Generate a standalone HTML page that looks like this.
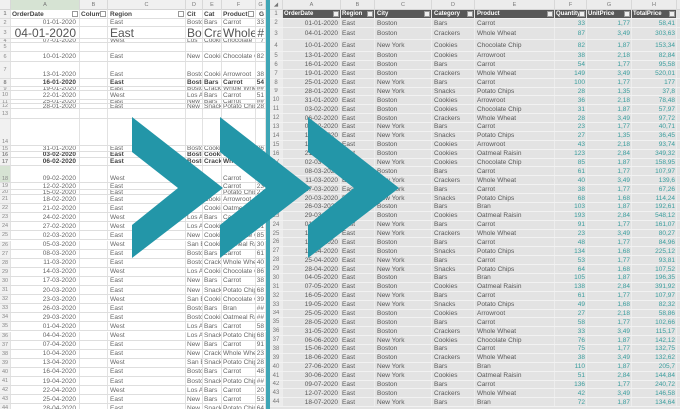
<!DOCTYPE html>
<html><head><meta charset="utf-8"><style>
*{margin:0;padding:0;box-sizing:border-box}
body{width:680px;height:409px;overflow:hidden;background:#fff;font-family:"Liberation Sans",sans-serif;position:relative}
.L{position:absolute;left:0;top:0;width:266px;height:409px;background:#fff;overflow:hidden}
.R{position:absolute;left:270px;top:0;width:410px;height:409px;background:#e3e3e3;overflow:hidden}
.bar{position:absolute;left:266px;top:0;width:4px;height:409px;background:#3fa6b6}
.row{position:absolute;left:0;width:100%;border-bottom:1px solid #dedede;font-size:6.5px;color:#666;overflow:hidden;white-space:nowrap}
.row span{position:absolute;top:0;height:100%;overflow:hidden;border-right:1px solid #e2e2e2;padding:0 1px;display:flex;align-items:center}
.L .n{left:0;width:11px;background:#f1f1f1;justify-content:center;color:#888;font-size:5.5px}
.L .a{left:11px;width:69px;justify-content:flex-end;padding-right:3px}
.L .b{left:80px;width:28px}
.L .c{left:108px;width:78px;padding-left:2px}
.L .d{left:186px;width:17px}
.L .e{left:203px;width:19px}
.L .f{left:222px;width:34px}
.L .g{left:256px;width:10px;justify-content:flex-end}
.hd{position:absolute;top:0;left:0;width:100%;height:10px;background:#f0f0f0;border-bottom:1px solid #d4d4d4;font-size:5.5px;color:#777}
.hd span{position:absolute;top:0;height:10px;display:flex;align-items:center;justify-content:center;border-right:1px solid #d8d8d8}
.b1{font-weight:bold;color:#444}
.big{font-size:12px;color:#555}
.R .row{border-bottom:1px solid #f2f2f2;color:#5a5a5a;font-size:6.5px}
.R .row span{border-right:1px solid #ededed}
.R .n{left:0;width:13px;background:#ececec;justify-content:center;color:#777;font-size:6px}
.R .a{left:13px;width:58px;justify-content:flex-end;padding-right:2px}
.R .b{left:71px;width:34px}
.R .c{left:105px;width:57px;padding-left:2px}
.R .d{left:162px;width:43px;padding-left:2px}
.R .e{left:205px;width:80px;padding-left:2px}
.R .f{left:285px;width:32px;justify-content:flex-end;color:#3a9e9e}
.R .g{left:317px;width:45px;justify-content:flex-end;color:#3a9e9e}
.R .h{left:362px;width:45px;justify-content:flex-end;color:#3a9e9e}
.R .hr span{background:#585858;color:#fff;font-weight:bold;border-right:1px solid #e3e3e3}
.R .hr span.n{background:#ececec;color:#777;font-weight:normal}
.fb{position:absolute;right:1px;top:1px;width:6px;height:6px;background:#eee;border:1px solid #999}
.L .hr .fb{background:#fff}
svg{position:absolute;left:0;top:0}
</style></head><body>
<div class="L">
<div class="hd"><span style="left:0;width:11px"></span><span style="left:11px;width:69px;background:#d6e3d3">A</span><span style="left:80px;width:28px">B</span><span style="left:108px;width:78px">C</span><span style="left:186px;width:17px">D</span><span style="left:203px;width:19px">E</span><span style="left:222px;width:34px">F</span><span style="left:256px;width:10px">G</span></div>
<div class="row hr b1" style="top:10px;height:9px"><span class="n">1</span><span class="a" style="justify-content:flex-start">OrderDate<i class="fb"></i></span><span class="b">Colum<i class="fb"></i></span><span class="c">Region<i class="fb"></i></span><span class="d">Cit</span><span class="e">Cat</span><span class="f">Product<i class="fb"></i></span><span class="g">G</span></div>
<div class="row" style="top:19px;height:8px"><span class="n">2</span><span class="a">01-01-2020</span><span class="b"></span><span class="c">East</span><span class="d">Bosto</span><span class="e">Bars</span><span class="f">Carrot</span><span class="g">33</span></div>
<div class="row big" style="top:27px;height:12px"><span class="n" style="font-size:5.5px">3</span><span class="a">04-01-2020</span><span class="b"></span><span class="c">East</span><span class="d">Bos</span><span class="e">Cracl</span><span class="f">Whole W</span><span class="g">#</span></div>
<div class="row" style="top:39px;height:4px"><span class="n">4</span><span class="a">07-01-2020</span><span class="b"></span><span class="c">West</span><span class="d">Los</span><span class="e">Cookie</span><span class="f">Chocolate</span><span class="g">7</span></div>
<div class="row" style="top:43px;height:9px"><span class="n">5</span><span class="a"></span><span class="b"></span><span class="c"></span><span class="d"></span><span class="e"></span><span class="f"></span><span class="g"></span></div>
<div class="row" style="top:52px;height:10px"><span class="n">6</span><span class="a">10-01-2020</span><span class="b"></span><span class="c">East</span><span class="d">New</span><span class="e">Cookie</span><span class="f">Chocolate C</span><span class="g">82</span></div>
<div class="row" style="top:62px;height:17px"><span class="n">7</span><span class="a" style="align-items:flex-end">13-01-2020</span><span class="b"></span><span class="c" style="align-items:flex-end">East</span><span class="d" style="align-items:flex-end">Bosto</span><span class="e" style="align-items:flex-end">Cookie</span><span class="f" style="align-items:flex-end">Arrowroot</span><span class="g" style="align-items:flex-end">38</span></div>
<div class="row b1" style="top:79px;height:8px"><span class="n">8</span><span class="a">16-01-2020</span><span class="b"></span><span class="c">East</span><span class="d">Bosto</span><span class="e">Bars</span><span class="f">Carrot</span><span class="g">54</span></div>
<div class="row" style="top:87px;height:4px"><span class="n">9</span><span class="a">19-01-2020</span><span class="b"></span><span class="c">East</span><span class="d">Bosto</span><span class="e">Cracke</span><span class="f">Whole Whe</span><span class="g">##</span></div>
<div class="row" style="top:91px;height:9px"><span class="n">10</span><span class="a">22-01-2020</span><span class="b"></span><span class="c">West</span><span class="d">Los A</span><span class="e">Bars</span><span class="f">Carrot</span><span class="g">51</span></div>
<div class="row" style="top:100px;height:4px"><span class="n">11</span><span class="a">25-01-2020</span><span class="b"></span><span class="c">East</span><span class="d">New</span><span class="e">Bars</span><span class="f">Carrot</span><span class="g">##</span></div>
<div class="row" style="top:104px;height:5px"><span class="n">12</span><span class="a">28-01-2020</span><span class="b"></span><span class="c">East</span><span class="d">New</span><span class="e">Snacks</span><span class="f">Potato Chip</span><span class="g">28</span></div>
<div class="row" style="top:109px;height:10px"><span class="n">13</span><span class="a"></span><span class="b"></span><span class="c"></span><span class="d"></span><span class="e"></span><span class="f"></span><span class="g"></span></div>
<div class="row" style="top:119px;height:27px"><span class="n" style="align-items:flex-end">14</span><span class="a"></span><span class="b"></span><span class="c"></span><span class="d"></span><span class="e"></span><span class="f"></span><span class="g"></span></div>
<div class="row" style="top:146px;height:6px"><span class="n">15</span><span class="a">31-01-2020</span><span class="b"></span><span class="c">East</span><span class="d">Bostc</span><span class="e">Cookie</span><span class="f">Arrowroot</span><span class="g">36</span></div>
<div class="row b1" style="top:152px;height:6px"><span class="n">16</span><span class="a">03-02-2020</span><span class="b"></span><span class="c">East</span><span class="d">Bostc</span><span class="e">Cookie</span><span class="f">Chocolate</span><span class="g">31</span></div>
<div class="row b1" style="top:158px;height:8px"><span class="n">17</span><span class="a">06-02-2020</span><span class="b"></span><span class="c">East</span><span class="d">Bostc</span><span class="e">Cracke</span><span class="f">Whole Whe</span><span class="g">28</span></div>
<div class="row" style="top:166px;height:17px"><span class="n" style="background:#d6e3d3;align-items:flex-end">18</span><span class="a" style="align-items:flex-end">09-02-2020</span><span class="b"></span><span class="c" style="align-items:flex-end">West</span><span class="d"></span><span class="e"></span><span class="f" style="align-items:flex-end">Carrot</span><span class="g"></span></div>
<div class="row" style="top:183px;height:7px"><span class="n">19</span><span class="a">12-02-2020</span><span class="b"></span><span class="c">East</span><span class="d"></span><span class="e"></span><span class="f">Carrot</span><span class="g">23</span></div>
<div class="row" style="top:190px;height:5px"><span class="n">20</span><span class="a">15-02-2020</span><span class="b"></span><span class="c">East</span><span class="d"></span><span class="e"></span><span class="f">Potato Chip</span><span class="g">27</span></div>
<div class="row" style="top:195px;height:9.1px"><span class="n">21</span><span class="a">18-02-2020</span><span class="b"></span><span class="c">East</span><span class="d"></span><span class="e">Cookie</span><span class="f">Arrowroot</span><span class="g">43</span></div>
<div class="row" style="top:204.1px;height:9.1px"><span class="n">22</span><span class="a">21-02-2020</span><span class="b"></span><span class="c">East</span><span class="d"></span><span class="e">Cookie</span><span class="f">Oatmeal</span><span class="g">##</span></div>
<div class="row" style="top:213.2px;height:9.1px"><span class="n">23</span><span class="a">24-02-2020</span><span class="b"></span><span class="c">West</span><span class="d">Los A</span><span class="e">Bars</span><span class="f">Carrot</span><span class="g">20</span></div>
<div class="row" style="top:222.3px;height:9.1px"><span class="n">24</span><span class="a">27-02-2020</span><span class="b"></span><span class="c">West</span><span class="d">Los A</span><span class="e">Cookie</span><span class="f">Chocolate C</span><span class="g">61</span></div>
<div class="row" style="top:231.4px;height:9.1px"><span class="n">25</span><span class="a">02-03-2020</span><span class="b"></span><span class="c">East</span><span class="d">New</span><span class="e">Cookie</span><span class="f">Chocolate C</span><span class="g">85</span></div>
<div class="row" style="top:240.5px;height:9.1px"><span class="n">26</span><span class="a">05-03-2020</span><span class="b"></span><span class="c">West</span><span class="d">San E</span><span class="e">Cookie</span><span class="f">Oatmeal Ra</span><span class="g">30</span></div>
<div class="row" style="top:249.6px;height:9.1px"><span class="n">27</span><span class="a">08-03-2020</span><span class="b"></span><span class="c">East</span><span class="d">Bostc</span><span class="e">Bars</span><span class="f">Carrot</span><span class="g">61</span></div>
<div class="row" style="top:258.7px;height:9.1px"><span class="n">28</span><span class="a">11-03-2020</span><span class="b"></span><span class="c">East</span><span class="d">Bostc</span><span class="e">Cracke</span><span class="f">Whole Whe</span><span class="g">40</span></div>
<div class="row" style="top:267.8px;height:9.1px"><span class="n">29</span><span class="a">14-03-2020</span><span class="b"></span><span class="c">West</span><span class="d">Los A</span><span class="e">Cookie</span><span class="f">Chocolate C</span><span class="g">86</span></div>
<div class="row" style="top:276.9px;height:9.1px"><span class="n">30</span><span class="a">17-03-2020</span><span class="b"></span><span class="c">East</span><span class="d">New</span><span class="e">Bars</span><span class="f">Carrot</span><span class="g">38</span></div>
<div class="row" style="top:286px;height:9.1px"><span class="n">31</span><span class="a">20-03-2020</span><span class="b"></span><span class="c">East</span><span class="d">New</span><span class="e">Snacks</span><span class="f">Potato Chip</span><span class="g">68</span></div>
<div class="row" style="top:295.1px;height:9.1px"><span class="n">32</span><span class="a">23-03-2020</span><span class="b"></span><span class="c">West</span><span class="d">San E</span><span class="e">Cookie</span><span class="f">Chocolate C</span><span class="g">39</span></div>
<div class="row" style="top:304.2px;height:9.1px"><span class="n">33</span><span class="a">26-03-2020</span><span class="b"></span><span class="c">East</span><span class="d">Bostc</span><span class="e">Bars</span><span class="f">Bran</span><span class="g">##</span></div>
<div class="row" style="top:313.3px;height:9.1px"><span class="n">34</span><span class="a">29-03-2020</span><span class="b"></span><span class="c">East</span><span class="d">Bostc</span><span class="e">Cookie</span><span class="f">Oatmeal Ra</span><span class="g">##</span></div>
<div class="row" style="top:322.4px;height:9.1px"><span class="n">35</span><span class="a">01-04-2020</span><span class="b"></span><span class="c">West</span><span class="d">Los A</span><span class="e">Bars</span><span class="f">Carrot</span><span class="g">58</span></div>
<div class="row" style="top:331.5px;height:9.1px"><span class="n">36</span><span class="a">04-04-2020</span><span class="b"></span><span class="c">West</span><span class="d">Los A</span><span class="e">Snacks</span><span class="f">Potato Chip</span><span class="g">68</span></div>
<div class="row" style="top:340.6px;height:9.1px"><span class="n">37</span><span class="a">07-04-2020</span><span class="b"></span><span class="c">East</span><span class="d">New</span><span class="e">Bars</span><span class="f">Carrot</span><span class="g">91</span></div>
<div class="row" style="top:349.7px;height:9.1px"><span class="n">38</span><span class="a">10-04-2020</span><span class="b"></span><span class="c">East</span><span class="d">New</span><span class="e">Cracke</span><span class="f">Whole Whe</span><span class="g">23</span></div>
<div class="row" style="top:358.8px;height:9.1px"><span class="n">39</span><span class="a">13-04-2020</span><span class="b"></span><span class="c">West</span><span class="d">San E</span><span class="e">Snacks</span><span class="f">Potato Chip</span><span class="g">28</span></div>
<div class="row" style="top:367.9px;height:9.1px"><span class="n">40</span><span class="a">16-04-2020</span><span class="b"></span><span class="c">East</span><span class="d">Bostc</span><span class="e">Bars</span><span class="f">Carrot</span><span class="g">48</span></div>
<div class="row" style="top:377px;height:9.1px"><span class="n">41</span><span class="a">19-04-2020</span><span class="b"></span><span class="c">East</span><span class="d">Bostc</span><span class="e">Snacks</span><span class="f">Potato Chip</span><span class="g">##</span></div>
<div class="row" style="top:386.1px;height:9.1px"><span class="n">42</span><span class="a">22-04-2020</span><span class="b"></span><span class="c">West</span><span class="d">Los A</span><span class="e">Bars</span><span class="f">Carrot</span><span class="g">20</span></div>
<div class="row" style="top:395.2px;height:9.1px"><span class="n">43</span><span class="a">25-04-2020</span><span class="b"></span><span class="c">East</span><span class="d">New</span><span class="e">Bars</span><span class="f">Carrot</span><span class="g">53</span></div>
<div class="row" style="top:404.3px;height:9.1px"><span class="n">44</span><span class="a">28-04-2020</span><span class="b"></span><span class="c">East</span><span class="d">New</span><span class="e">Snacks</span><span class="f">Potato Chip</span><span class="g">64</span></div>
</div>
<div class="bar"></div>
<div class="R">
<div class="hd" style="background:#ececec"><span style="left:0;width:13px">◢</span><span style="left:13px;width:58px">A</span><span style="left:71px;width:34px">B</span><span style="left:105px;width:57px">C</span><span style="left:162px;width:43px">D</span><span style="left:205px;width:80px">E</span><span style="left:285px;width:32px">F</span><span style="left:317px;width:45px">G</span><span style="left:362px;width:45px">H</span></div>
<div class="row hr" style="top:10px;height:9px;font-size:6px"><span class="n">1</span><span class="a" style="justify-content:flex-start">OrderDate<i class="fb"></i></span><span class="b">Region<i class="fb"></i></span><span class="c">City<i class="fb"></i></span><span class="d">Category<i class="fb"></i></span><span class="e">Product<i class="fb"></i></span><span class="f" style="justify-content:flex-start;color:#fff">Quantity<i class="fb"></i></span><span class="g" style="justify-content:flex-start;color:#fff">UnitPrice<i class="fb"></i></span><span class="h" style="justify-content:flex-start;color:#fff">TotalPrice<i class="fb"></i></span></div>
<div class="row" style="top:19px;height:9px"><span class="n">2</span><span class="a">01-01-2020</span><span class="b">East</span><span class="c">Boston</span><span class="d">Bars</span><span class="e">Carrot</span><span class="f">33</span><span class="g">1,77</span><span class="h">58,41</span></div>
<div class="row" style="top:28px;height:12px"><span class="n">3</span><span class="a">04-01-2020</span><span class="b">East</span><span class="c">Boston</span><span class="d">Crackers</span><span class="e">Whole Wheat</span><span class="f">87</span><span class="g">3,49</span><span class="h">303,63</span></div>
<div class="row" style="top:40px;height:12px"><span class="n">4</span><span class="a">10-01-2020</span><span class="b">East</span><span class="c">New York</span><span class="d">Cookies</span><span class="e">Chocolate Chip</span><span class="f">82</span><span class="g">1,87</span><span class="h">153,34</span></div>
<div class="row" style="top:52px;height:8.88px"><span class="n">5</span><span class="a">13-01-2020</span><span class="b">East</span><span class="c">Boston</span><span class="d">Cookies</span><span class="e">Arrowroot</span><span class="f">38</span><span class="g">2,18</span><span class="h">82,84</span></div>
<div class="row" style="top:60.88px;height:8.88px"><span class="n">6</span><span class="a">16-01-2020</span><span class="b">East</span><span class="c">Boston</span><span class="d">Bars</span><span class="e">Carrot</span><span class="f">54</span><span class="g">1,77</span><span class="h">95,58</span></div>
<div class="row" style="top:69.76px;height:8.88px"><span class="n">7</span><span class="a">19-01-2020</span><span class="b">East</span><span class="c">Boston</span><span class="d">Crackers</span><span class="e">Whole Wheat</span><span class="f">149</span><span class="g">3,49</span><span class="h">520,01</span></div>
<div class="row" style="top:78.64px;height:8.88px"><span class="n">8</span><span class="a">25-01-2020</span><span class="b">East</span><span class="c">New York</span><span class="d">Bars</span><span class="e">Carrot</span><span class="f">100</span><span class="g">1,77</span><span class="h">177</span></div>
<div class="row" style="top:87.52px;height:8.88px"><span class="n">9</span><span class="a">28-01-2020</span><span class="b">East</span><span class="c">New York</span><span class="d">Snacks</span><span class="e">Potato Chips</span><span class="f">28</span><span class="g">1,35</span><span class="h">37,8</span></div>
<div class="row" style="top:96.4px;height:8.88px"><span class="n">10</span><span class="a">31-01-2020</span><span class="b">East</span><span class="c">Boston</span><span class="d">Cookies</span><span class="e">Arrowroot</span><span class="f">36</span><span class="g">2,18</span><span class="h">78,48</span></div>
<div class="row" style="top:105.28px;height:8.88px"><span class="n">11</span><span class="a">03-02-2020</span><span class="b">East</span><span class="c">Boston</span><span class="d">Cookies</span><span class="e">Chocolate Chip</span><span class="f">31</span><span class="g">1,87</span><span class="h">57,97</span></div>
<div class="row" style="top:114.16px;height:8.88px"><span class="n">12</span><span class="a">06-02-2020</span><span class="b">East</span><span class="c">Boston</span><span class="d">Crackers</span><span class="e">Whole Wheat</span><span class="f">28</span><span class="g">3,49</span><span class="h">97,72</span></div>
<div class="row" style="top:123.04px;height:8.88px"><span class="n">13</span><span class="a">09-02-2020</span><span class="b">East</span><span class="c">New York</span><span class="d">Bars</span><span class="e">Carrot</span><span class="f">23</span><span class="g">1,77</span><span class="h">40,71</span></div>
<div class="row" style="top:131.92px;height:8.88px"><span class="n">14</span><span class="a">12-02-2020</span><span class="b">East</span><span class="c">New York</span><span class="d">Snacks</span><span class="e">Potato Chips</span><span class="f">27</span><span class="g">1,35</span><span class="h">36,45</span></div>
<div class="row" style="top:140.8px;height:8.88px"><span class="n">15</span><span class="a">18-02-2020</span><span class="b">East</span><span class="c">Boston</span><span class="d">Cookies</span><span class="e">Arrowroot</span><span class="f">43</span><span class="g">2,18</span><span class="h">93,74</span></div>
<div class="row" style="top:149.68px;height:8.88px"><span class="n">16</span><span class="a">21-02-2020</span><span class="b">East</span><span class="c">Boston</span><span class="d">Cookies</span><span class="e">Oatmeal Raisin</span><span class="f">123</span><span class="g">2,84</span><span class="h">349,32</span></div>
<div class="row" style="top:158.56px;height:8.88px"><span class="n">17</span><span class="a">02-03-2020</span><span class="b">East</span><span class="c">New York</span><span class="d">Cookies</span><span class="e">Chocolate Chip</span><span class="f">85</span><span class="g">1,87</span><span class="h">158,95</span></div>
<div class="row" style="top:167.44px;height:8.88px"><span class="n">18</span><span class="a">08-03-2020</span><span class="b">East</span><span class="c">Boston</span><span class="d">Bars</span><span class="e">Carrot</span><span class="f">61</span><span class="g">1,77</span><span class="h">107,97</span></div>
<div class="row" style="top:176.32px;height:8.88px"><span class="n">19</span><span class="a">11-03-2020</span><span class="b">East</span><span class="c">New York</span><span class="d">Crackers</span><span class="e">Whole Wheat</span><span class="f">40</span><span class="g">3,49</span><span class="h">139,6</span></div>
<div class="row" style="top:185.2px;height:8.88px"><span class="n">20</span><span class="a">17-03-2020</span><span class="b">East</span><span class="c">New York</span><span class="d">Bars</span><span class="e">Carrot</span><span class="f">38</span><span class="g">1,77</span><span class="h">67,26</span></div>
<div class="row" style="top:194.08px;height:8.88px"><span class="n">21</span><span class="a">20-03-2020</span><span class="b">East</span><span class="c">New York</span><span class="d">Snacks</span><span class="e">Potato Chips</span><span class="f">68</span><span class="g">1,68</span><span class="h">114,24</span></div>
<div class="row" style="top:202.96px;height:8.88px"><span class="n">22</span><span class="a">26-03-2020</span><span class="b">East</span><span class="c">Boston</span><span class="d">Bars</span><span class="e">Bran</span><span class="f">103</span><span class="g">1,87</span><span class="h">192,61</span></div>
<div class="row" style="top:211.84px;height:8.88px"><span class="n">23</span><span class="a">29-03-2020</span><span class="b">East</span><span class="c">Boston</span><span class="d">Cookies</span><span class="e">Oatmeal Raisin</span><span class="f">193</span><span class="g">2,84</span><span class="h">548,12</span></div>
<div class="row" style="top:220.72px;height:8.88px"><span class="n">24</span><span class="a">01-04-2020</span><span class="b">East</span><span class="c">New York</span><span class="d">Bars</span><span class="e">Carrot</span><span class="f">91</span><span class="g">1,77</span><span class="h">161,07</span></div>
<div class="row" style="top:229.6px;height:8.88px"><span class="n">25</span><span class="a">10-04-2020</span><span class="b">East</span><span class="c">New York</span><span class="d">Crackers</span><span class="e">Whole Wheat</span><span class="f">23</span><span class="g">3,49</span><span class="h">80,27</span></div>
<div class="row" style="top:238.48px;height:8.88px"><span class="n">26</span><span class="a">16-04-2020</span><span class="b">East</span><span class="c">Boston</span><span class="d">Bars</span><span class="e">Carrot</span><span class="f">48</span><span class="g">1,77</span><span class="h">84,96</span></div>
<div class="row" style="top:247.36px;height:8.88px"><span class="n">27</span><span class="a">19-04-2020</span><span class="b">East</span><span class="c">Boston</span><span class="d">Snacks</span><span class="e">Potato Chips</span><span class="f">134</span><span class="g">1,68</span><span class="h">225,12</span></div>
<div class="row" style="top:256.24px;height:8.88px"><span class="n">28</span><span class="a">25-04-2020</span><span class="b">East</span><span class="c">New York</span><span class="d">Bars</span><span class="e">Carrot</span><span class="f">53</span><span class="g">1,77</span><span class="h">93,81</span></div>
<div class="row" style="top:265.12px;height:8.88px"><span class="n">29</span><span class="a">28-04-2020</span><span class="b">East</span><span class="c">New York</span><span class="d">Snacks</span><span class="e">Potato Chips</span><span class="f">64</span><span class="g">1,68</span><span class="h">107,52</span></div>
<div class="row" style="top:274px;height:8.88px"><span class="n">30</span><span class="a">04-05-2020</span><span class="b">East</span><span class="c">Boston</span><span class="d">Bars</span><span class="e">Bran</span><span class="f">105</span><span class="g">1,87</span><span class="h">196,35</span></div>
<div class="row" style="top:282.88px;height:8.88px"><span class="n">31</span><span class="a">07-05-2020</span><span class="b">East</span><span class="c">Boston</span><span class="d">Cookies</span><span class="e">Oatmeal Raisin</span><span class="f">138</span><span class="g">2,84</span><span class="h">391,92</span></div>
<div class="row" style="top:291.76px;height:8.88px"><span class="n">32</span><span class="a">16-05-2020</span><span class="b">East</span><span class="c">New York</span><span class="d">Bars</span><span class="e">Carrot</span><span class="f">61</span><span class="g">1,77</span><span class="h">107,97</span></div>
<div class="row" style="top:300.64px;height:8.88px"><span class="n">33</span><span class="a">19-05-2020</span><span class="b">East</span><span class="c">New York</span><span class="d">Snacks</span><span class="e">Potato Chips</span><span class="f">49</span><span class="g">1,68</span><span class="h">82,32</span></div>
<div class="row" style="top:309.52px;height:8.88px"><span class="n">34</span><span class="a">25-05-2020</span><span class="b">East</span><span class="c">Boston</span><span class="d">Cookies</span><span class="e">Arrowroot</span><span class="f">27</span><span class="g">2,18</span><span class="h">58,86</span></div>
<div class="row" style="top:318.4px;height:8.88px"><span class="n">35</span><span class="a">28-05-2020</span><span class="b">East</span><span class="c">Boston</span><span class="d">Bars</span><span class="e">Carrot</span><span class="f">58</span><span class="g">1,77</span><span class="h">102,66</span></div>
<div class="row" style="top:327.28px;height:8.88px"><span class="n">36</span><span class="a">31-05-2020</span><span class="b">East</span><span class="c">Boston</span><span class="d">Crackers</span><span class="e">Whole Wheat</span><span class="f">33</span><span class="g">3,49</span><span class="h">115,17</span></div>
<div class="row" style="top:336.16px;height:8.88px"><span class="n">37</span><span class="a">06-06-2020</span><span class="b">East</span><span class="c">New York</span><span class="d">Cookies</span><span class="e">Chocolate Chip</span><span class="f">76</span><span class="g">1,87</span><span class="h">142,12</span></div>
<div class="row" style="top:345.04px;height:8.88px"><span class="n">38</span><span class="a">15-06-2020</span><span class="b">East</span><span class="c">Boston</span><span class="d">Bars</span><span class="e">Carrot</span><span class="f">75</span><span class="g">1,77</span><span class="h">132,75</span></div>
<div class="row" style="top:353.92px;height:8.88px"><span class="n">39</span><span class="a">18-06-2020</span><span class="b">East</span><span class="c">Boston</span><span class="d">Crackers</span><span class="e">Whole Wheat</span><span class="f">38</span><span class="g">3,49</span><span class="h">132,62</span></div>
<div class="row" style="top:362.8px;height:8.88px"><span class="n">40</span><span class="a">27-06-2020</span><span class="b">East</span><span class="c">New York</span><span class="d">Bars</span><span class="e">Bran</span><span class="f">110</span><span class="g">1,87</span><span class="h">205,7</span></div>
<div class="row" style="top:371.68px;height:8.88px"><span class="n">41</span><span class="a">30-06-2020</span><span class="b">East</span><span class="c">New York</span><span class="d">Cookies</span><span class="e">Oatmeal Raisin</span><span class="f">51</span><span class="g">2,84</span><span class="h">144,84</span></div>
<div class="row" style="top:380.56px;height:8.88px"><span class="n">42</span><span class="a">09-07-2020</span><span class="b">East</span><span class="c">Boston</span><span class="d">Bars</span><span class="e">Carrot</span><span class="f">136</span><span class="g">1,77</span><span class="h">240,72</span></div>
<div class="row" style="top:389.44px;height:8.88px"><span class="n">43</span><span class="a">12-07-2020</span><span class="b">East</span><span class="c">Boston</span><span class="d">Crackers</span><span class="e">Whole Wheat</span><span class="f">42</span><span class="g">3,49</span><span class="h">146,58</span></div>
<div class="row" style="top:398.32px;height:8.88px"><span class="n">44</span><span class="a">18-07-2020</span><span class="b">East</span><span class="c">New York</span><span class="d">Bars</span><span class="e">Bran</span><span class="f">72</span><span class="g">1,87</span><span class="h">134,64</span></div>
</div>
<svg width="680" height="409" viewBox="0 0 680 409">
<g fill="#2396a8">
<polygon points="132,117 223,188 132,258 132,225 178,188 132,152"/>
<polygon points="220,117 311,188 220,258 220,225 266,188 220,152"/>
<polygon points="308,117 399,188 308,258 308,225 354,188 308,152"/>
</g>
</svg>
</body></html>
